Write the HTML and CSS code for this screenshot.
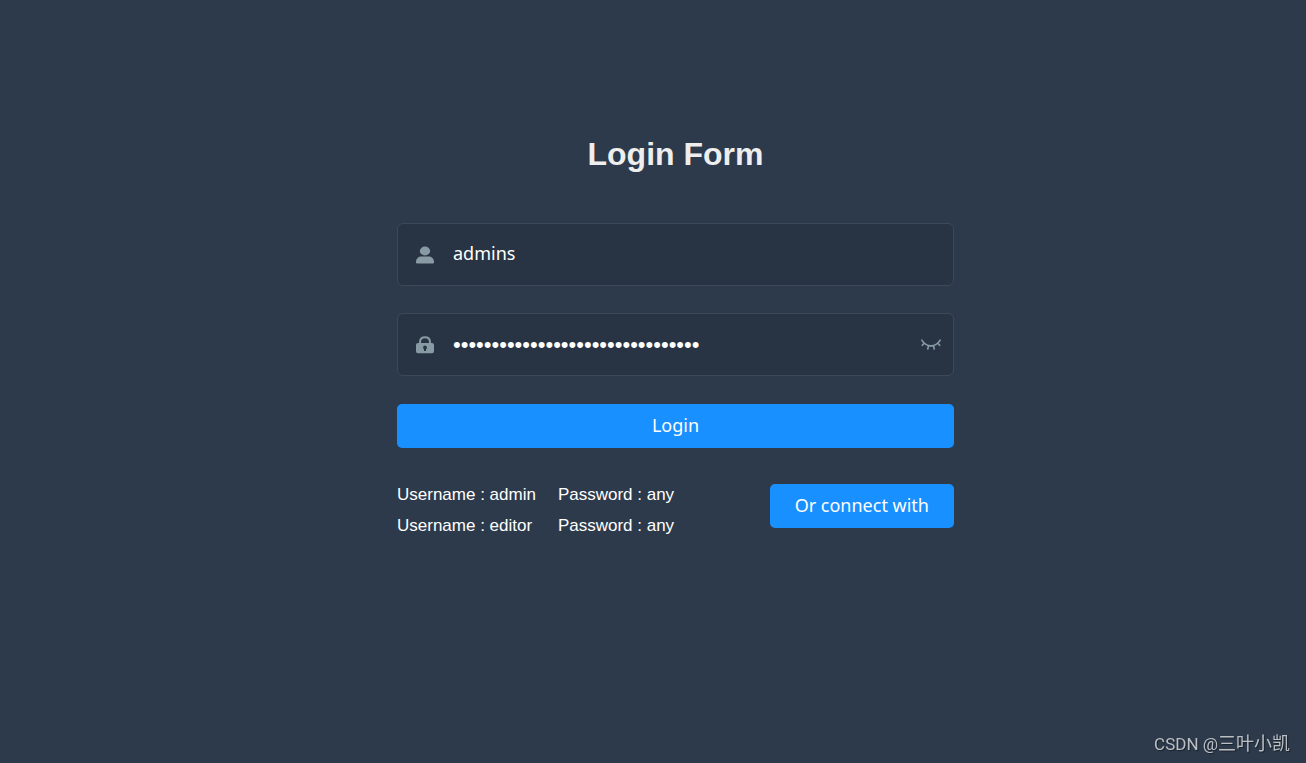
FILE: index.html
```html
<!DOCTYPE html>
<html lang="en">
<head>
<meta charset="utf-8">
<meta name="viewport" content="width=device-width, initial-scale=1">
<title>Login Form</title>
<link rel="stylesheet" href="styles.css">
</head>
<body>
<main class="page">
  <form class="login">
    <h1 class="title">Login Form</h1>
    <div class="field">
      <label class="field-icon" for="username" aria-label="Username">
        <svg width="18" height="18" viewBox="0 0 18 18" fill="currentColor"><ellipse cx="9" cy="5" rx="5.2" ry="4.4"/><path d="M0 16.200C0 12.600 2.500 10.600 5.500 10.600H12.500C15.500 10.600 18 12.600 18 16.200Q18 17.400 16.800 17.400H1.200Q0 17.400 0 16.200Z"/></svg>
      </label>
      <input class="input" id="username" type="text" value="admins">
    </div>
    <div class="field">
      <label class="field-icon" for="password" aria-label="Password">
        <svg width="18" height="18" viewBox="0 0 18 18"><path d="M4 8V6.200C4 3.300 6 1.300 9 1.300S14 3.300 14 6.200V8" fill="none" stroke="currentColor" stroke-width="2"/><path fill="currentColor" fill-rule="evenodd" d="M2 7H16Q18 7 18 9V15.300Q18 17.300 16 17.300H2Q0 17.300 0 15.300V9Q0 7 2 7ZM9 9.500A2 2 0 0 0 8 13.200V15H10V13.200A2 2 0 0 0 9 9.500Z"/></svg>
      </label>
      <input class="input input-password" id="password" type="password" value="12345678901234567890123456789012">
      <button class="toggle" type="button" aria-label="Show password">
        <svg width="20" height="12" viewBox="0 0 20 12" fill="none" stroke="currentColor" stroke-width="1.600" stroke-linecap="round"><path d="M.8 1.200C5.500 8.800 14.500 8.800 19.200 1.200M3.200 4.200L1.300 6.300M7.400 6.900L6.800 10M12.600 6.900L13.200 10M16.800 4.200L18.700 6.300"/></svg>
      </button>
    </div>
    <button class="button" type="submit">Login</button>
    <div class="footer">
      <div class="tips">
        <span>Username : admin</span><span>Password : any</span>
        <span>Username : editor</span><span>Password : any</span>
      </div>
      <button class="button" type="button">Or connect with</button>
    </div>
  </form>
</main>
<div class="watermark">CSDN @<span class="watermark-name" lang="zh">三叶小凯</span></div>
</body>
</html>
```
FILE: styles.css
```css
* {
  box-sizing: border-box;
}

body {
  margin: 0;
  min-height: 100vh;
  background: #2d3a4b;
  color: #fff;
  font-family: "Liberation Sans", Arial, sans-serif;
}

.page {
  display: flex;
  justify-content: center;
  padding: 134px 0 40px 45px;
}

.login {
  display: flex;
  flex-direction: column;
  width: 100%;
  max-width: 557px;
}

.title {
  margin: 0 0 49px;
  color: #eee;
  font-size: 32px;
  line-height: 40px;
  text-align: center;
}

.field {
  display: flex;
  align-items: center;
  height: 63px;
  margin-bottom: 27px;
  padding: 0 12px 0 18px;
  border: 1px solid #3e4957;
  border-radius: 6px;
  background: #283443;
}

.field-icon {
  display: flex;
  padding-top: 1px;
  margin-right: 19px;
  color: #889aa4;
}

.input {
  flex: 1;
  min-width: 0;
  height: 60px;
  padding: 0 0 3px;
  border: 0;
  outline: 0;
  background: transparent;
  color: #fff;
  font-family: "Noto Sans", sans-serif;
  font-size: 18px;
}

.input-password {
  padding: 0;
  font-family: "Liberation Sans", Arial, sans-serif;
  font-size: 22px;
}

.toggle {
  display: flex;
  padding: 0;
  border: 0;
  background: transparent;
  color: #889aa4;
  cursor: pointer;
}

.button {
  height: 44px;
  padding: 0 25px 2px;
  border: 0;
  border-radius: 5px;
  background: #1890ff;
  color: #fff;
  font-family: "Noto Sans", sans-serif;
  font-size: 18px;
  cursor: pointer;
}

.field + .button {
  margin: 1px 0 36px;
}

.footer {
  display: flex;
  align-items: flex-start;
  justify-content: space-between;
}

.tips {
  display: grid;
  grid-template-columns: auto auto;
  column-gap: 22px;
  margin-top: -5px;
  font-size: 17px;
  line-height: 31px;
}

.watermark {
  position: fixed;
  right: 16px;
  bottom: 6px;
  color: #bcc0c5;
  font-family: Roboto, sans-serif;
  font-size: 17px;
  line-height: 26px;
  text-shadow: 1px 1px 1px #18212c;
}

.watermark-name {
  font-family: "Noto Sans CJK SC", sans-serif;
  font-size: 18px;
}
```
